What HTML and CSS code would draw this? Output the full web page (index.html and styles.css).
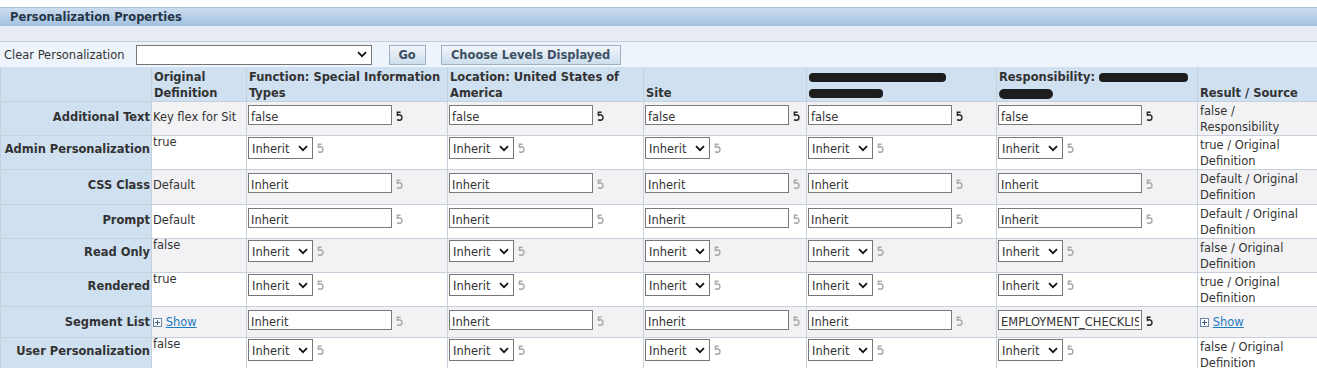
FILE: index.html
```html
<!DOCTYPE html>
<html lang="en">
<head>
    <meta charset="UTF-8">
    <title>Personalization Properties</title>
    <link rel="stylesheet" href="styles.css">
</head>
<body>
    <svg class="defs" width="0" height="0">
        <symbol id="reset" viewBox="0 0 7 10">
            <path d="M1.4 0.6v4.2M1 1.2h3.6" fill="none" stroke="currentColor" stroke-width="1.5"/>
            <path d="M1.4 4.6c2-1.4 4.6-0.9 4.6 1.9s-2.6 3.3-5 2.3" fill="none" stroke="currentColor" stroke-width="1.5"/>
        </symbol>
        <symbol id="chev" viewBox="0 0 10 7">
            <path d="M1 1.2l4 4 4-4" fill="none" stroke="#111" stroke-width="1.7"/>
        </symbol>
        <symbol id="plus" viewBox="0 0 9 9">
            <rect x="0.5" y="0.5" width="8" height="8" fill="#fff" stroke="#6a86a6"/>
            <path d="M2 4.5h5M4.5 2v5" stroke="#3f5f82" stroke-width="1"/>
        </symbol>
    </svg>

    <div class="page">
        <div class="section-title">Personalization Properties</div>
        <div class="section-band"></div>

        <div class="toolbar">
            <label for="clearLevel">Clear Personalization</label>
            <span class="sel sel-clear">
                <select id="clearLevel">
                    <option value=""></option>
                </select>
                <svg class="chev"><use href="#chev"/></svg>
            </span>
            <button class="btn btn-go">Go</button>
            <button class="btn btn-levels">Choose Levels Displayed</button>
        </div>

        <table class="props">
            <colgroup>
                <col class="c-label">
                <col class="c-orig">
                <col class="c-func">
                <col class="c-loc">
                <col class="c-site">
                <col class="c-org">
                <col class="c-resp">
                <col class="c-result">
            </colgroup>
            <thead>
                <tr>
                    <th></th>
                    <th>Original<br>Definition</th>
                    <th>Function: Special Information<br>Types</th>
                    <th>Location: United States of<br>America</th>
                    <th>Site</th>
                    <th><span class="scrib scrib-a"></span><br><span class="scrib scrib-b"></span></th>
                    <th>Responsibility: <span class="scrib scrib-c"></span><br><span class="scrib scrib-d"></span></th>
                    <th>Result / Source</th>
                </tr>
            </thead>
            <tbody>
                <tr class="alt">
                    <td class="label">Additional Text</td>
                    <td class="orig">Key flex for Sit</td>
                    <td class="level"><input type="text" value="false"><svg class="reset on"><use href="#reset"/></svg></td>
                    <td class="level"><input type="text" value="false"><svg class="reset on"><use href="#reset"/></svg></td>
                    <td class="level"><input type="text" value="false"><svg class="reset on"><use href="#reset"/></svg></td>
                    <td class="level"><input type="text" value="false"><svg class="reset on"><use href="#reset"/></svg></td>
                    <td class="level"><input type="text" value="false"><svg class="reset on"><use href="#reset"/></svg></td>
                    <td class="result">false /<br>Responsibility</td>
                </tr>
                <tr>
                    <td class="label">Admin Personalization</td>
                    <td class="orig top">true</td>
                    <td class="level"><span class="sel"><select><option>Inherit</option></select><svg class="chev"><use href="#chev"/></svg></span><svg class="reset"><use href="#reset"/></svg></td>
                    <td class="level"><span class="sel"><select><option>Inherit</option></select><svg class="chev"><use href="#chev"/></svg></span><svg class="reset"><use href="#reset"/></svg></td>
                    <td class="level"><span class="sel"><select><option>Inherit</option></select><svg class="chev"><use href="#chev"/></svg></span><svg class="reset"><use href="#reset"/></svg></td>
                    <td class="level"><span class="sel"><select><option>Inherit</option></select><svg class="chev"><use href="#chev"/></svg></span><svg class="reset"><use href="#reset"/></svg></td>
                    <td class="level"><span class="sel"><select><option>Inherit</option></select><svg class="chev"><use href="#chev"/></svg></span><svg class="reset"><use href="#reset"/></svg></td>
                    <td class="result">true / Original<br>Definition</td>
                </tr>
                <tr class="alt tall">
                    <td class="label">CSS Class</td>
                    <td class="orig">Default</td>
                    <td class="level"><input type="text" value="Inherit"><svg class="reset"><use href="#reset"/></svg></td>
                    <td class="level"><input type="text" value="Inherit"><svg class="reset"><use href="#reset"/></svg></td>
                    <td class="level"><input type="text" value="Inherit"><svg class="reset"><use href="#reset"/></svg></td>
                    <td class="level"><input type="text" value="Inherit"><svg class="reset"><use href="#reset"/></svg></td>
                    <td class="level"><input type="text" value="Inherit"><svg class="reset"><use href="#reset"/></svg></td>
                    <td class="result">Default / Original<br>Definition</td>
                </tr>
                <tr>
                    <td class="label">Prompt</td>
                    <td class="orig">Default</td>
                    <td class="level"><input type="text" value="Inherit"><svg class="reset"><use href="#reset"/></svg></td>
                    <td class="level"><input type="text" value="Inherit"><svg class="reset"><use href="#reset"/></svg></td>
                    <td class="level"><input type="text" value="Inherit"><svg class="reset"><use href="#reset"/></svg></td>
                    <td class="level"><input type="text" value="Inherit"><svg class="reset"><use href="#reset"/></svg></td>
                    <td class="level"><input type="text" value="Inherit"><svg class="reset"><use href="#reset"/></svg></td>
                    <td class="result">Default / Original<br>Definition</td>
                </tr>
                <tr class="alt">
                    <td class="label">Read Only</td>
                    <td class="orig top">false</td>
                    <td class="level"><span class="sel"><select><option>Inherit</option></select><svg class="chev"><use href="#chev"/></svg></span><svg class="reset"><use href="#reset"/></svg></td>
                    <td class="level"><span class="sel"><select><option>Inherit</option></select><svg class="chev"><use href="#chev"/></svg></span><svg class="reset"><use href="#reset"/></svg></td>
                    <td class="level"><span class="sel"><select><option>Inherit</option></select><svg class="chev"><use href="#chev"/></svg></span><svg class="reset"><use href="#reset"/></svg></td>
                    <td class="level"><span class="sel"><select><option>Inherit</option></select><svg class="chev"><use href="#chev"/></svg></span><svg class="reset"><use href="#reset"/></svg></td>
                    <td class="level"><span class="sel"><select><option>Inherit</option></select><svg class="chev"><use href="#chev"/></svg></span><svg class="reset"><use href="#reset"/></svg></td>
                    <td class="result">false / Original<br>Definition</td>
                </tr>
                <tr>
                    <td class="label">Rendered</td>
                    <td class="orig top">true</td>
                    <td class="level"><span class="sel"><select><option>Inherit</option></select><svg class="chev"><use href="#chev"/></svg></span><svg class="reset"><use href="#reset"/></svg></td>
                    <td class="level"><span class="sel"><select><option>Inherit</option></select><svg class="chev"><use href="#chev"/></svg></span><svg class="reset"><use href="#reset"/></svg></td>
                    <td class="level"><span class="sel"><select><option>Inherit</option></select><svg class="chev"><use href="#chev"/></svg></span><svg class="reset"><use href="#reset"/></svg></td>
                    <td class="level"><span class="sel"><select><option>Inherit</option></select><svg class="chev"><use href="#chev"/></svg></span><svg class="reset"><use href="#reset"/></svg></td>
                    <td class="level"><span class="sel"><select><option>Inherit</option></select><svg class="chev"><use href="#chev"/></svg></span><svg class="reset"><use href="#reset"/></svg></td>
                    <td class="result">true / Original<br>Definition</td>
                </tr>
                <tr class="alt seg">
                    <td class="label">Segment List</td>
                    <td class="orig"><svg class="plus"><use href="#plus"/></svg> <a href="#">Show</a></td>
                    <td class="level"><input type="text" value="Inherit"><svg class="reset"><use href="#reset"/></svg></td>
                    <td class="level"><input type="text" value="Inherit"><svg class="reset"><use href="#reset"/></svg></td>
                    <td class="level"><input type="text" value="Inherit"><svg class="reset"><use href="#reset"/></svg></td>
                    <td class="level"><input type="text" value="Inherit"><svg class="reset"><use href="#reset"/></svg></td>
                    <td class="level"><input type="text" value="EMPLOYMENT_CHECKLIST"><svg class="reset on"><use href="#reset"/></svg></td>
                    <td class="result"><svg class="plus"><use href="#plus"/></svg> <a href="#">Show</a></td>
                </tr>
                <tr>
                    <td class="label">User Personalization</td>
                    <td class="orig top">false</td>
                    <td class="level"><span class="sel"><select><option>Inherit</option></select><svg class="chev"><use href="#chev"/></svg></span><svg class="reset"><use href="#reset"/></svg></td>
                    <td class="level"><span class="sel"><select><option>Inherit</option></select><svg class="chev"><use href="#chev"/></svg></span><svg class="reset"><use href="#reset"/></svg></td>
                    <td class="level"><span class="sel"><select><option>Inherit</option></select><svg class="chev"><use href="#chev"/></svg></span><svg class="reset"><use href="#reset"/></svg></td>
                    <td class="level"><span class="sel"><select><option>Inherit</option></select><svg class="chev"><use href="#chev"/></svg></span><svg class="reset"><use href="#reset"/></svg></td>
                    <td class="level"><span class="sel"><select><option>Inherit</option></select><svg class="chev"><use href="#chev"/></svg></span><svg class="reset"><use href="#reset"/></svg></td>
                    <td class="result">false / Original<br>Definition</td>
                </tr>
            </tbody>
        </table>
    </div>
</body>
</html>
```

FILE: styles.css
```css
body {
    margin: 0;
    font-family: "DejaVu Sans Condensed", "DejaVu Sans", sans-serif;
    font-stretch: condensed;
    font-size: 12.75px;
    color: #333;
    background: #fff;
}
.defs {
    position: absolute;
    width: 0;
    height: 0;
}
.page {
    padding-top: 7px;
}
.section-title {
    height: 18px;
    line-height: 18px;
    border-top: 1px solid #a7bfd6;
    background: linear-gradient(#cbdcee, #a2c2e1);
    color: #263646;
    font-weight: bold;
    padding-left: 10px;
}
.section-band {
    height: 15px;
    background: #e8edf5;
    border-bottom: 1px solid #c6cdd6;
}
.toolbar {
    display: flex;
    align-items: center;
    height: 25px;
    padding-left: 4px;
    background: #edf4fb;
}
.toolbar label {
    margin-right: 11px;
}
.btn {
    height: 20px;
    padding: 0;
    border: 1px solid #9fb0c2;
    background: linear-gradient(#f1f6fa, #cddeec);
    color: #3e5065;
    font: inherit;
    font-weight: bold;
    cursor: pointer;
}
.btn-go {
    width: 37px;
}
.btn-levels {
    width: 180px;
    margin-left: 15px;
}

/* select with drawn chevron */
.sel {
    position: relative;
    display: inline-block;
}
.sel select {
    appearance: none;
    -webkit-appearance: none;
    display: block;
    box-sizing: border-box;
    border: 1px solid #767676;
    border-radius: 0;
    background: #fff;
    color: #333;
    font: inherit;
}
.sel .chev {
    position: absolute;
    right: 5px;
    top: 50%;
    width: 10px;
    height: 7px;
    margin-top: -4px;
    pointer-events: none;
}
.sel-clear {
    margin-right: 17px;
}
.sel-clear select {
    width: 236px;
    height: 20px;
}

.props {
    width: 1317px;
    border-collapse: collapse;
    table-layout: fixed;
}
.c-label { width: 151px; }
.c-orig { width: 95px; }
.c-func { width: 201px; }
.c-loc { width: 196px; }
.c-site { width: 163px; }
.c-org { width: 190px; }
.c-resp { width: 201px; }
.c-result { width: 120px; }
.props th,
.props td {
    border: 1px solid #c7d0db;
    padding: 1px 2px 0;
    line-height: 16px;
    text-align: left;
}
.props th {
    height: 33px;
    border-top: none;
    background: #cfe0f1;
    vertical-align: bottom;
    white-space: nowrap;
    overflow: hidden;
}
.props td {
    background: #fff;
    vertical-align: baseline;
}
.props tr.alt td {
    background: #f2f2f5;
}
.props td.label,
.props tr.alt td.label {
    background: #cfe0f1;
    font-weight: bold;
    text-align: right;
    white-space: nowrap;
    padding-right: 1px;
}
.props td.orig {
    padding-left: 1px;
    white-space: nowrap;
    overflow: hidden;
}
.props td.orig.top {
    vertical-align: top;
    line-height: 10px;
}
.props td.level {
    padding-left: 1px;
    white-space: nowrap;
    overflow: hidden;
}
.props td.result {
    vertical-align: top;
}
.props tr.tall {
    height: 35px;
}
.props tr.seg {
    height: 31px;
}
.props tr.seg td.result {
    vertical-align: baseline;
}
.level input {
    width: 144px;
    height: 20px;
    box-sizing: border-box;
    margin: 2px 0;
    padding: 2px 2px 0;
    border: 1px solid #7a7a7a;
    border-radius: 0;
    background: #fff;
    color: #333;
    font: inherit;
}
.level .sel select {
    width: 65px;
    height: 22px;
    margin-bottom: 1px;
    padding: 1px 3px 0;
}
.level .sel {
    vertical-align: baseline;
}
.reset {
    width: 7px;
    height: 10px;
    margin-left: 4px;
    color: #a9a9a9;
}
.reset.on {
    color: #2a2a2a;
}
.plus {
    width: 9px;
    height: 9px;
    vertical-align: -1px;
}
.props a {
    color: #1f7bc1;
}
.scrib {
    display: inline-block;
    height: 9px;
    background: #1d1d1d;
    border-radius: 4px;
    vertical-align: middle;
}
.scrib-a { width: 137px; }
.scrib-b { width: 74px; }
.scrib-c { width: 89px; }
.scrib-d { width: 54px; border-radius: 6px; height: 10px; }
```
